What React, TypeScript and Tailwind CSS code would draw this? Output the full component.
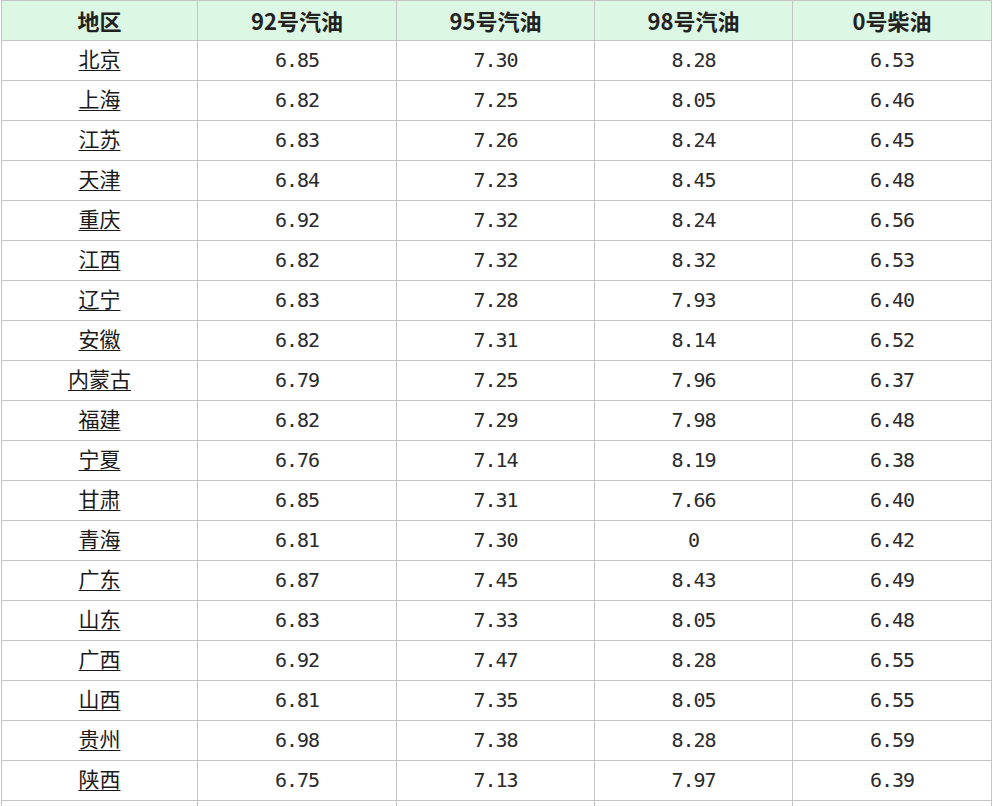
const rows: [string, string, string, string, string][] = [
  ['北京', '6.85', '7.30', '8.28', '6.53'],
  ['上海', '6.82', '7.25', '8.05', '6.46'],
  ['江苏', '6.83', '7.26', '8.24', '6.45'],
  ['天津', '6.84', '7.23', '8.45', '6.48'],
  ['重庆', '6.92', '7.32', '8.24', '6.56'],
  ['江西', '6.82', '7.32', '8.32', '6.53'],
  ['辽宁', '6.83', '7.28', '7.93', '6.40'],
  ['安徽', '6.82', '7.31', '8.14', '6.52'],
  ['内蒙古', '6.79', '7.25', '7.96', '6.37'],
  ['福建', '6.82', '7.29', '7.98', '6.48'],
  ['宁夏', '6.76', '7.14', '8.19', '6.38'],
  ['甘肃', '6.85', '7.31', '7.66', '6.40'],
  ['青海', '6.81', '7.30', '0', '6.42'],
  ['广东', '6.87', '7.45', '8.43', '6.49'],
  ['山东', '6.83', '7.33', '8.05', '6.48'],
  ['广西', '6.92', '7.47', '8.28', '6.55'],
  ['山西', '6.81', '7.35', '8.05', '6.55'],
  ['贵州', '6.98', '7.38', '8.28', '6.59'],
  ['陕西', '6.75', '7.13', '7.97', '6.39'],
];

const headers = ['地区', '92号汽油', '95号汽油', '98号汽油', '0号柴油'];

export default function App() {
  return (
    <div className="w-[1000px] h-[806px] overflow-hidden bg-white pl-px">
      <table className="table-fixed border-collapse w-[991px] text-[#222]">
        <colgroup>
          <col className="w-[196px]" />
          <col className="w-[199px]" />
          <col className="w-[198px]" />
          <col className="w-[198px]" />
          <col className="w-[199px]" />
        </colgroup>
        <thead>
          <tr className="h-[40px] bg-[#dcf7e4]">
            {headers.map((h) => (
              <th
                key={h}
                className="border border-[#c4c4c4] text-center font-bold text-[22px] font-['Noto_Sans_CJK_SC','Noto_Sans',sans-serif]"
              >
                {h}
              </th>
            ))}
          </tr>
        </thead>
        <tbody>
          {rows.map((r) => (
            <tr key={r[0]} className="h-[40px]">
              <td className="border border-[#c4c4c4] text-center pb-[4px]">
                <span className="underline underline-offset-[3px] decoration-1 text-[21px] text-[#1a1a1a] font-['Noto_Sans_CJK_SC',sans-serif]">
                  {r[0]}
                </span>
              </td>
              {r.slice(1).map((v, i) => (
                <td
                  key={i}
                  className="border border-[#c4c4c4] text-center pb-[2px] text-[20px] tracking-[-1px] text-[#2a2a2a] font-['DejaVu_Sans_Mono',monospace]"
                >
                  {v}
                </td>
              ))}
            </tr>
          ))}
          <tr className="h-[40px]">
            {headers.map((h) => (
              <td key={h} className="border border-[#c4c4c4]"></td>
            ))}
          </tr>
        </tbody>
      </table>
    </div>
  );
}
